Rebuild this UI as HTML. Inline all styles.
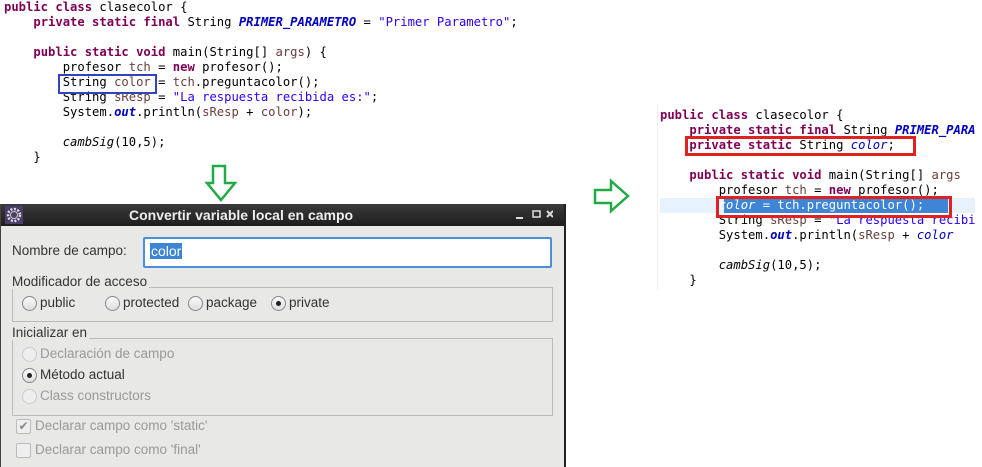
<!DOCTYPE html>
<html><head><meta charset="utf-8"><style>
body{margin:0;width:982px;height:467px;background:#fff;position:relative;overflow:hidden;font-family:"Liberation Sans","DejaVu Sans",sans-serif}
.code{position:absolute;font-family:"DejaVu Sans Mono",monospace;font-size:12.2px;line-height:15px;white-space:pre;color:#000}
.k{color:#7f0055;font-weight:bold}.s{color:#2a00ff}.c{color:#0000c0;font-style:italic;font-weight:bold}.v{color:#6a3e3e}.i{font-style:italic}.f{color:#0000c0;font-style:italic}
.dlg{position:absolute;left:0;top:204px;width:563px;height:263px;background:#e8e8e7;border-right:2px solid #222;border-left:1px solid #444}
.tb{height:22px;background:linear-gradient(#3a3a3a,#1e1e1e);color:#eee;font-size:14px;font-weight:bold;line-height:22px;position:relative}
.lbl{position:absolute;font-size:13.5px;color:#333;white-space:nowrap}
.grey{color:#999}
.rad{position:absolute;width:13px;height:13px;border:1px solid #888;border-radius:50%;background:linear-gradient(#fafafa,#ddd)}
.rad.on::after{content:"";position:absolute;left:4px;top:4px;width:5px;height:5px;border-radius:50%;background:#222}
.rad.dis{border-color:#ccc;background:#eee}
.grp{position:absolute;border:1px solid #bbb}
.cb{position:absolute;width:13px;height:13px;border:1px solid #bbb;border-radius:2px;background:#eee}
</style></head><body>
<div class="code" style="left:4px;top:0"><span class="k">public class</span> clasecolor {
    <span class="k">private static final</span> String <span class="c">PRIMER_PARAMETRO</span> = <span class="s">"Primer Parametro"</span>;

    <span class="k">public static void</span> main(String[] <span class="v">args</span>) {
        profesor <span class="v">tch</span> = <span class="k">new</span> profesor();
        String <span class="v">color</span> = <span class="v">tch</span>.preguntacolor();
        String <span class="v">sResp</span> = <span class="s">"La respuesta recibida es:"</span>;
        System.<span class="c">out</span>.println(<span class="v">sResp</span> + <span class="v">color</span>);

        <span class="i">cambSig</span>(10,5);
    }</div>
<div style="position:absolute;left:58px;top:74px;width:95px;height:16px;border:2px solid #3344bb"></div>
<svg style="position:absolute;left:0;top:0" width="982" height="467">
<polygon points="213,166 225,166 225,183 235,183 221,200 207,183 213,183" fill="none" stroke="#22aa44" stroke-width="2.5"/>
<polygon points="595,190 611,190 611,181 628,196 611,211 611,203 595,203" fill="none" stroke="#22aa44" stroke-width="2.5"/>
</svg>
<div style="position:absolute;left:657px;top:104px;width:318px;height:186px;border-left:1px solid #eee"></div>
<div style="position:absolute;left:660px;top:198px;width:315px;height:15px;background:#e8f2fe"></div>
<div style="position:absolute;left:724px;top:198px;width:224px;height:15px;background:#3e85d6"></div>
<div class="code" style="left:660px;top:108px;width:315px;overflow:hidden"><span class="k">public class</span> clasecolor {
    <span class="k">private static final</span> String <span class="c">PRIMER_PARAMETRO</span>
    <span class="k">private static</span> String <span class="f">color</span>;

    <span class="k">public static void</span> main(String[] <span class="v">args</span>
        profesor <span class="v">tch</span> = <span class="k">new</span> profesor();
        <span class="f" style="color:#fff">color</span><span style="color:#fff"> = tch.preguntacolor();</span>
        String <span class="v">sResp</span> = <span class="s">"La respuesta recibida</span>
        System.<span class="c">out</span>.println(<span class="v">sResp</span> + <span class="f">color</span>
 
        <span class="i">cambSig</span>(10,5);
    }</div>
<div style="position:absolute;left:685px;top:136px;width:231px;height:20px;border:3px solid #dd2222;box-sizing:border-box"></div>
<div style="position:absolute;left:716px;top:196px;width:236px;height:22px;border:3px solid #dd2222;box-sizing:border-box"></div>
<div class="dlg">
<div class="tb"><span style="position:absolute;left:128px;top:0">Convertir variable local en campo</span>
<svg style="position:absolute;left:4px;top:2px" width="18" height="18"><rect width="18" height="18" fill="#4a3d6a"/><circle cx="9" cy="9" r="6" fill="none" stroke="#ddd" stroke-width="2.5" stroke-dasharray="2 1.5"/><circle cx="9" cy="9" r="3.5" fill="#4a3d6a" stroke="#ccc"/></svg>
<svg style="position:absolute;left:512px;top:5px" width="40" height="12"><rect x="3" y="8" width="7" height="2" fill="#ddd"/><rect x="20" y="2" width="7" height="6" fill="none" stroke="#ddd" stroke-width="1.5"/><path d="M34 2l6 6M40 2l-6 6" stroke="#ddd" stroke-width="2"/></svg></div>
<div class="lbl" style="left:11px;top:39px">Nombre de campo:</div>
<div style="position:absolute;left:142px;top:33px;width:405px;height:27px;background:#fff;border:2px solid #4a90d9;border-radius:2px"></div>
<div style="position:absolute;left:149px;top:39px;background:#3e85d6;color:#fff;font-size:14px;line-height:16px;padding:0 1px">color</div>
<div class="grp" style="left:11px;top:83px;width:539px;height:33px"></div>
<div class="lbl" style="left:11px;top:70px;background:#e8e8e7;padding-right:2px">Modificador de acceso</div>
<div class="rad" style="left:21px;top:92px"></div><div class="lbl" style="left:39px;top:91px">public</div>
<div class="rad" style="left:104px;top:92px"></div><div class="lbl" style="left:122px;top:91px">protected</div>
<div class="rad" style="left:187px;top:92px"></div><div class="lbl" style="left:205px;top:91px">package</div>
<div class="rad on" style="left:270px;top:92px"></div><div class="lbl" style="left:288px;top:91px">private</div>
<div class="grp" style="left:11px;top:134px;width:539px;height:76px"></div>
<div class="lbl" style="left:11px;top:121px;background:#e8e8e7;padding-right:2px">Inicializar en</div>
<div class="rad dis" style="left:21px;top:143px"></div><div class="lbl grey" style="left:39px;top:142px">Declaración de campo</div>
<div class="rad on" style="left:21px;top:164px"></div><div class="lbl" style="left:39px;top:163px">Método actual</div>
<div class="rad dis" style="left:21px;top:185px"></div><div class="lbl grey" style="left:39px;top:184px">Class constructors</div>
<div class="cb" style="left:15px;top:215px;color:#888;font-size:12px;line-height:13px;text-align:center">✔</div><div class="lbl grey" style="left:34px;top:214px">Declarar campo como 'static'</div>
<div class="cb" style="left:15px;top:239px"></div><div class="lbl grey" style="left:34px;top:238px">Declarar campo como 'final'</div>
</div>
</body></html>
